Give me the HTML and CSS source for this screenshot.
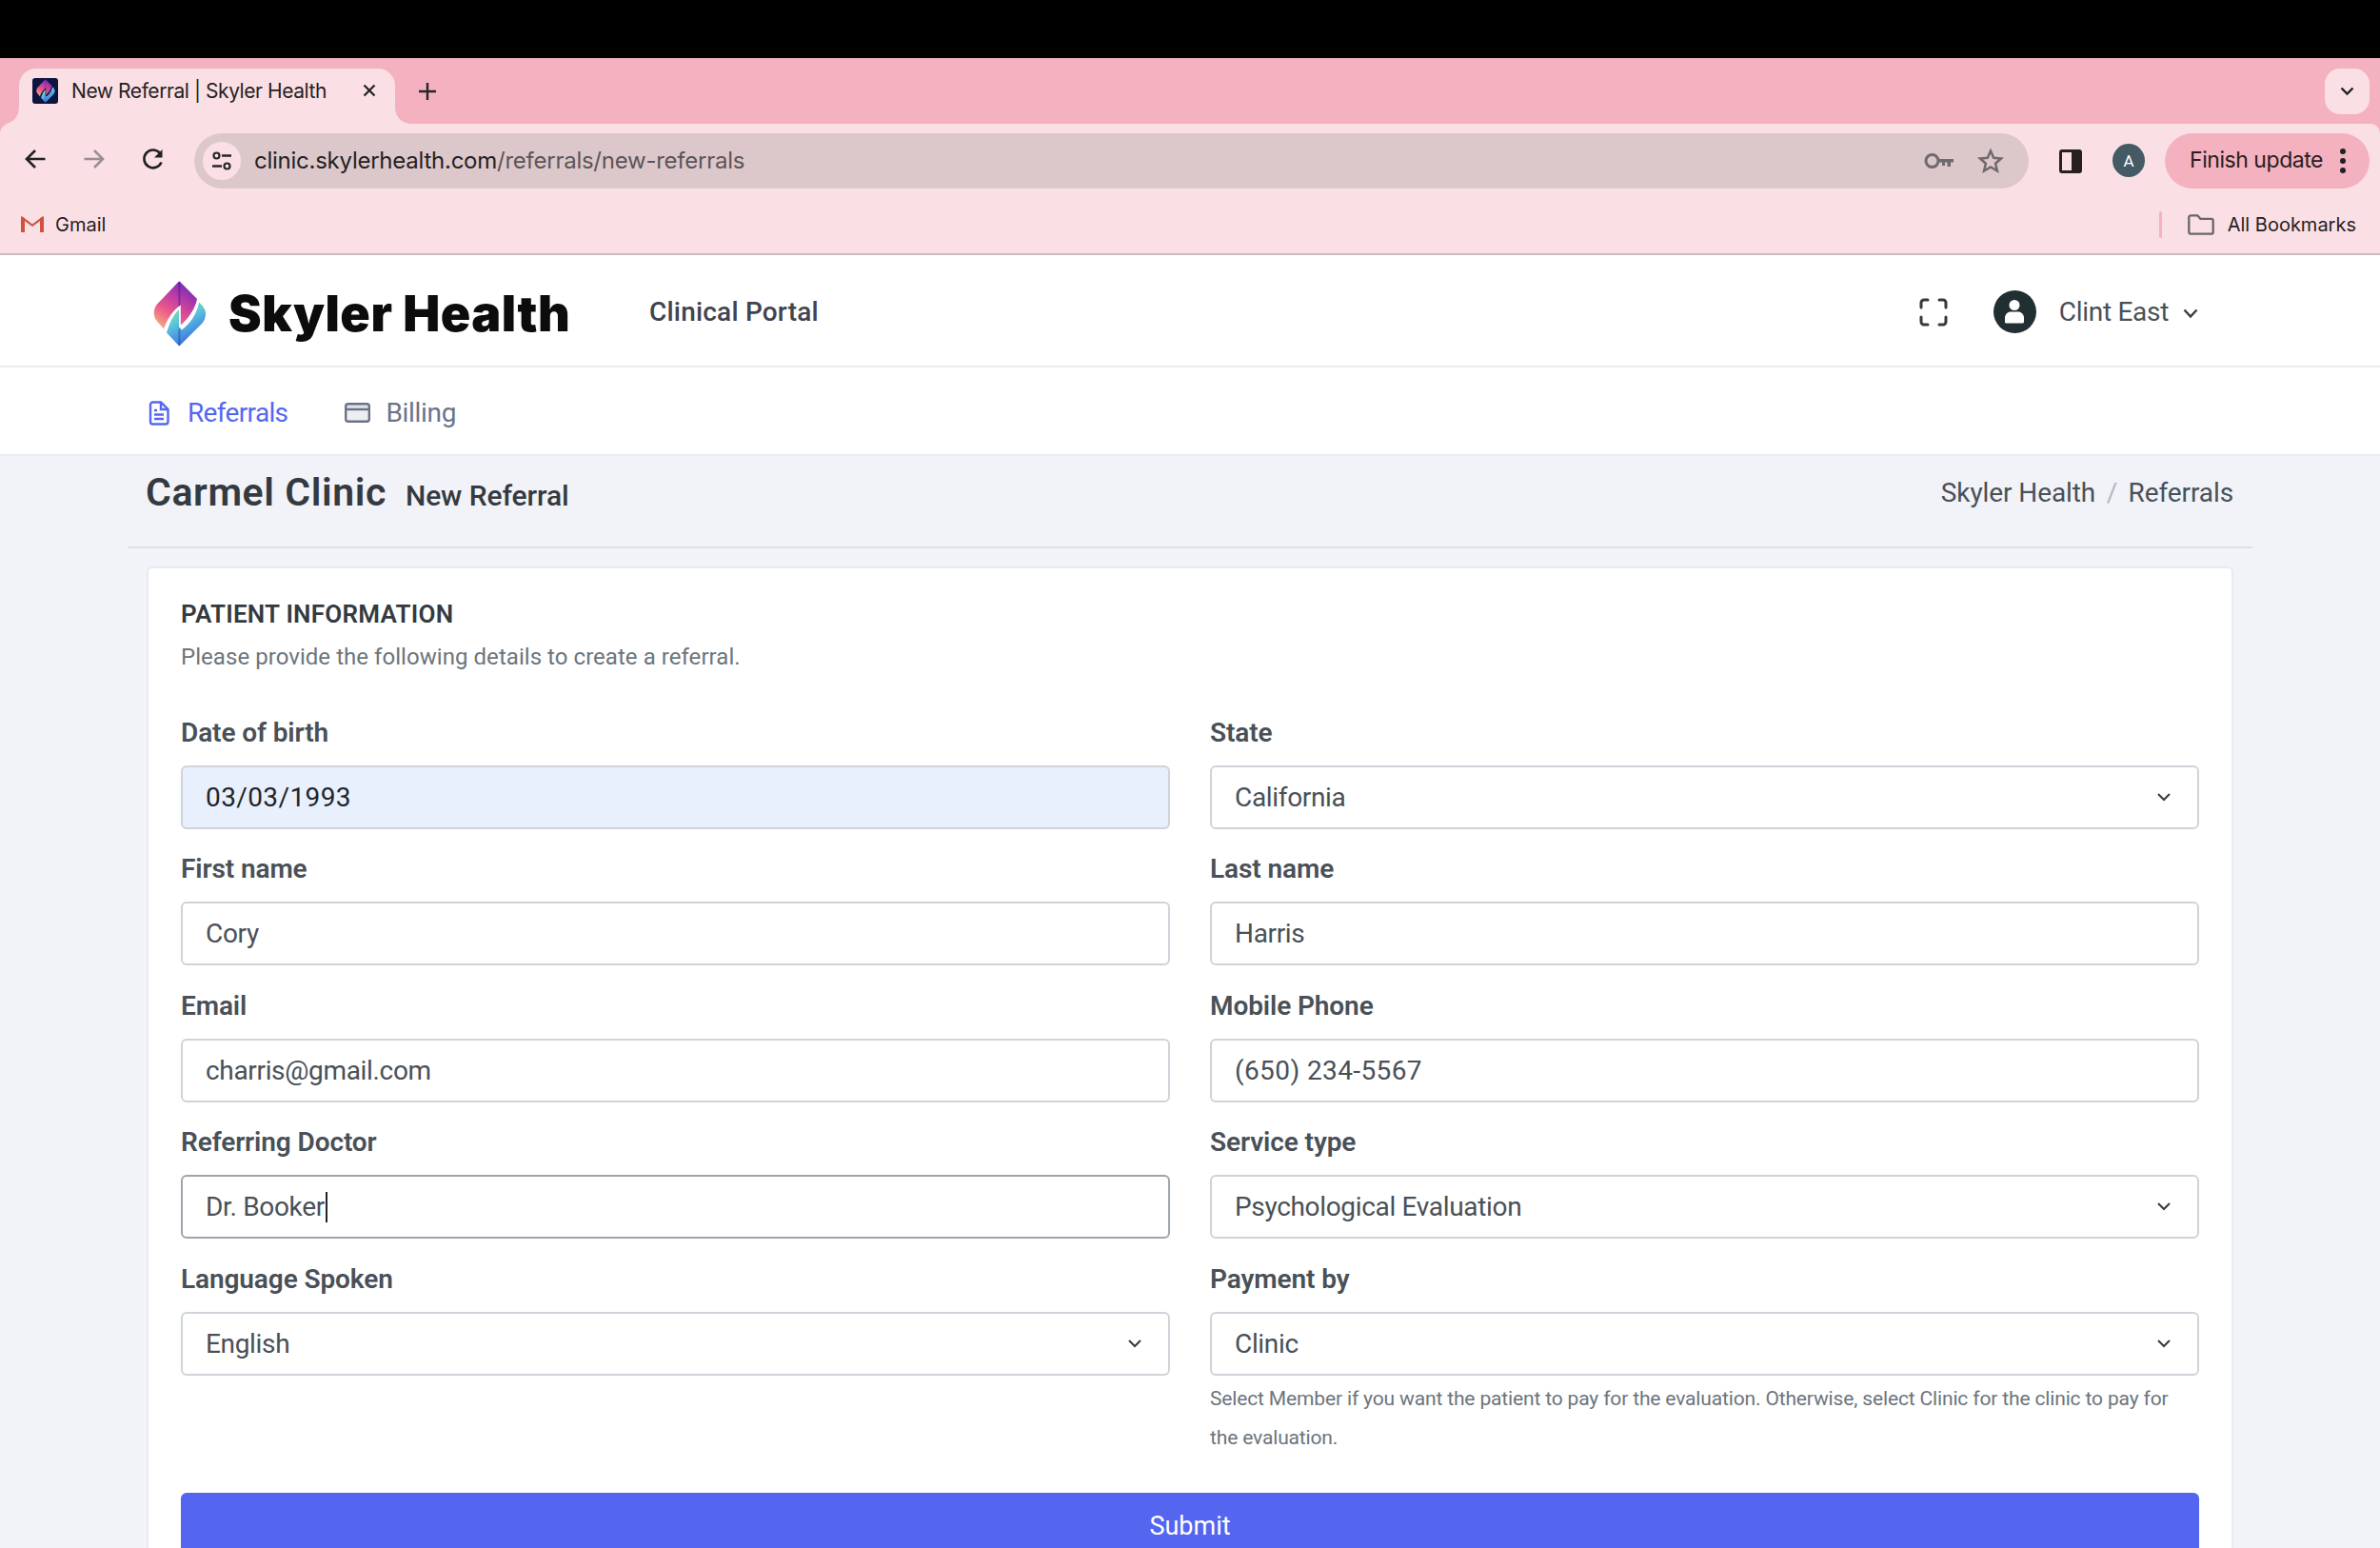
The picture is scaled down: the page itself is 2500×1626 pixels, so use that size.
FILE: index.html
```html
<!DOCTYPE html>
<html lang="en">
<head>
<meta charset="utf-8">
<title>New Referral | Skyler Health</title>
<link rel="stylesheet" href="styles.css">
</head>
<body>
<svg class="defs" width="0" height="0" aria-hidden="true">
  <defs>
    <linearGradient id="gA" x1="0.7" y1="0" x2="0.1" y2="1">
      <stop offset="0" stop-color="#6f2bb8"/><stop offset="0.3" stop-color="#b83aa6"/><stop offset="0.62" stop-color="#e9578a"/><stop offset="1" stop-color="#f8b582"/>
    </linearGradient>
    <linearGradient id="gB" x1="0.2" y1="0" x2="0.7" y2="1">
      <stop offset="0" stop-color="#8ce6a6"/><stop offset="0.4" stop-color="#5cc6dc"/><stop offset="0.75" stop-color="#4489e2"/><stop offset="1" stop-color="#2f4fc0"/>
    </linearGradient>
    <symbol id="flame" viewBox="21 15.500 56 69">
      <path fill="url(#gA)" d="M47.500 16.500Q48.300 15.700 49.100 16.500L67 34.500C65 45 58 55 49.800 62V41L47 43C40 49 35 57 32 66L25 58Q21.700 54 21.700 50Q21.700 44 25 40Z"/>
      <path fill="url(#gB)" d="M48 45.500V63.500L51 67C60 60 67 50 69 38L73 42Q76 46 76 50Q76 56 72.500 60L49.100 83.300Q48.300 84 47.500 83.300L35 70C38 60 42 51 48 45.500Z"/>
      <path fill="#4a1a9a" opacity=".55" d="M47.500 16.500h1.800v24.500l-1.800 1.500z"/>
      <path fill="#24408f" opacity=".5" d="M47.500 66h1.800v17.500h-1.800z"/>
    </symbol>
  </defs>
</svg>

<div class="topbar"></div>

<div class="chrome">
<div class="tabstrip">
  <div class="tab">
    <span class="favicon"><svg width="20" height="25"><use href="#flame"/></svg></span>
    <span class="tab-title">New Referral | Skyler Health</span>
    <svg class="tab-close" width="16" height="16" viewBox="0 0 16 16"><path d="M2.500 2.500l11 11M13.500 2.500l-11 11" stroke="#202124" stroke-width="2.200" fill="none"/></svg>
  </div>
  <svg class="tab-new" width="20" height="20" viewBox="0 0 20 20"><path d="M10 1v18M1 10h18" stroke="#2a2528" stroke-width="2.400"/></svg>
  <div class="tab-menu"><svg width="15" height="10" viewBox="0 0 15 10"><path d="M1.500 1.500l6 6 6-6" stroke="#202124" stroke-width="2.400" fill="none"/></svg></div>
</div>

<div class="toolbar">
  <div class="navrow">
    <svg class="nav-ic" width="24" height="24" viewBox="0 0 24 24"><path d="M22.500 12H3.500M12 3l-9 9 9 9" stroke="#202124" stroke-width="2.600" fill="none"/></svg>
    <svg class="nav-ic dim" width="24" height="24" viewBox="0 0 24 24"><path d="M1.500 12h19M12 3l9 9-9 9" stroke="#9b8d92" stroke-width="2.600" fill="none"/></svg>
    <svg class="nav-ic" width="24" height="24" viewBox="0 0 24 24"><path d="M20.500 15.500A9.400 9.400 0 1 1 18.800 5.600" stroke="#202124" stroke-width="2.600" fill="none"/><path d="M21.500 2v8.500h-8.500z" fill="#202124"/></svg>
    <div class="urlbar">
      <span class="tune"><svg width="22" height="20" viewBox="0 0 22 20"><circle cx="5.500" cy="4.500" r="3" fill="none" stroke="#2a2528" stroke-width="2.200"/><path d="M11 4.500h10M1 15.500h10" stroke="#2a2528" stroke-width="2.400"/><circle cx="16.500" cy="15.500" r="3" fill="none" stroke="#2a2528" stroke-width="2.200"/></svg></span>
      <span class="url"><span class="url-host">clinic.skylerhealth.com</span>/referrals/new-referrals</span>
      <svg class="key" width="32" height="18" viewBox="0 0 32 18"><circle cx="8.500" cy="9" r="6.500" fill="none" stroke="#6f6a6c" stroke-width="3"/><path d="M15 7h16v3.500h-3V15h-3.500v-4.500H22V14h-3v-3.500h-4z" fill="#6f6a6c"/></svg>
      <svg class="star" width="28" height="28" viewBox="0 0 28 28"><path d="M14 3.500l3.200 7.300 7.800.7-5.900 5.200 1.800 7.800-6.900-4.100-6.900 4.100 1.800-7.800L3 11.500l7.800-.7z" fill="none" stroke="#6f6a6c" stroke-width="2.500"/></svg>
    </div>
    <div class="side-panel"><span></span></div>
    <div class="profile">A</div>
    <div class="finish">
      <span class="finish-text">Finish update</span>
      <svg width="8" height="28" viewBox="0 0 8 28"><circle cx="4" cy="4" r="3" fill="#202124"/><circle cx="4" cy="14" r="3" fill="#202124"/><circle cx="4" cy="24" r="3" fill="#202124"/></svg>
    </div>
  </div>
  <div class="bookmarks">
    <svg width="26" height="19" viewBox="0 0 26 19"><path d="M1 18V2l12 9 12-9v16h-4V8l-8 6-8-6v10z" fill="#e5e3e3"/><path d="M1 18V1.500h1.500L5 3.500V18z" fill="#d2513f"/><path d="M25 18V1.500h-1.500L21 3.500V18z" fill="#d2513f"/><path d="M2.500 1.500L13 9.500l10.500-8 1 2L13 12 1.500 3.500z" fill="#d2513f"/></svg>
    <span class="bm-text">Gmail</span>
    <span class="bm-sep"></span>
    <svg class="folder" width="28" height="22" viewBox="0 0 28 22"><path d="M1.300 3.300c0-1.100.9-2 2-2h7l3 3.500h11.400c1.100 0 2 .9 2 2v11.900c0 1.100-.9 2-2 2H3.300c-1.100 0-2-.9-2-2z" fill="none" stroke="#6b6668" stroke-width="2.300"/></svg>
    <span class="bm-text">All Bookmarks</span>
  </div>
</div>
</div>

<header class="app-header">
  <div class="brand">
    <svg class="logo" width="56" height="69"><use href="#flame"/></svg>
    <span class="brand-name">Skyler Health</span>
  </div>
  <span class="portal">Clinical Portal</span>
  <svg class="expand" width="30" height="30" viewBox="0 0 30 30"><path d="M2 10V5a3 3 0 0 1 3-3h4M21 2h4a3 3 0 0 1 3 3v5M28 20v5a3 3 0 0 1-3 3h-4M9 28H5a3 3 0 0 1-3-3v-5" fill="none" stroke="#343a40" stroke-width="3" stroke-linecap="round"/></svg>
  <span class="user-avatar"><svg width="22" height="26" viewBox="0 0 22 26"><circle cx="11" cy="6.500" r="5.500" fill="#fff"/><path d="M1 24v-4c0-4 3-6.500 6-6.500h8c3 0 6 2.500 6 6.500v4c0 1-1 1.500-1.500 1.500h-17C1.700 25.500 1 25 1 24z" fill="#fff"/></svg></span>
  <span class="user-name">Clint East</span>
  <svg class="user-caret" width="16" height="11" viewBox="0 0 16 11"><path d="M1.500 1.500l6.500 7 6.500-7" fill="none" stroke="#343a40" stroke-width="2.400"/></svg>
</header>

<nav class="app-nav">
  <a class="nav-link active">
    <svg width="22" height="26" viewBox="0 0 22 26"><path d="M2 4a2.500 2.500 0 0 1 2.500-2.500H13L20.500 9v13a2.500 2.500 0 0 1-2.500 2.500H4.500A2.500 2.500 0 0 1 2 22z" fill="none" stroke="#5468ef" stroke-width="2.400"/><path d="M13 2v7h7M6 10h3M6 14.500h10M6 19h10" fill="none" stroke="#5468ef" stroke-width="2.400"/></svg>
    <span>Referrals</span>
  </a>
  <a class="nav-link billing">
    <svg width="27" height="21" viewBox="0 0 27 21"><rect x="1.200" y="1.200" width="24.600" height="18.600" rx="2.500" fill="none" stroke="#6c7389" stroke-width="2.400"/><path d="M1.500 7h24" stroke="#6c7389" stroke-width="2.400"/><rect x="2" y="2" width="23" height="5" fill="#6c7389" opacity=".2"/><rect x="2" y="8" width="23" height="11" fill="#6c7389" opacity=".12"/></svg>
    <span>Billing</span>
  </a>
</nav>

<main class="page">
  <div class="page-head">
    <div class="titles">
      <h1>Carmel Clinic</h1>
      <span class="sub-title">New Referral</span>
    </div>
    <div class="crumbs"><span>Skyler Health</span><span class="slash">/</span><span>Referrals</span></div>
  </div>

  <section class="card">
    <h2>PATIENT INFORMATION</h2>
    <p class="lead">Please provide the following details to create a referral.</p>
    <div class="form-grid">
      <div class="field"><div class="label">Date of birth</div><div class="control autofill num">03/03/1993</div></div>
      <div class="field"><div class="label">State</div><div class="control">California<svg class="chev" width="14" height="9" viewBox="0 0 14 9"><path d="M1 1l6 6 6-6" fill="none" stroke="#343a40" stroke-width="2"/></svg></div></div>
      <div class="field"><div class="label">First name</div><div class="control">Cory</div></div>
      <div class="field"><div class="label">Last name</div><div class="control">Harris</div></div>
      <div class="field"><div class="label">Email</div><div class="control">charris@gmail.com</div></div>
      <div class="field"><div class="label">Mobile Phone</div><div class="control num">(650) 234-5567</div></div>
      <div class="field"><div class="label">Referring Doctor</div><div class="control focused">Dr. Booker<span class="caret"></span></div></div>
      <div class="field"><div class="label">Service type</div><div class="control">Psychological Evaluation<svg class="chev" width="14" height="9" viewBox="0 0 14 9"><path d="M1 1l6 6 6-6" fill="none" stroke="#343a40" stroke-width="2"/></svg></div></div>
      <div class="field"><div class="label">Language Spoken</div><div class="control">English<svg class="chev" width="14" height="9" viewBox="0 0 14 9"><path d="M1 1l6 6 6-6" fill="none" stroke="#343a40" stroke-width="2"/></svg></div></div>
      <div class="field"><div class="label">Payment by</div><div class="control">Clinic<svg class="chev" width="14" height="9" viewBox="0 0 14 9"><path d="M1 1l6 6 6-6" fill="none" stroke="#343a40" stroke-width="2"/></svg></div>
        <p class="help">Select Member if you want the patient to pay for the evaluation. Otherwise, select Clinic for the clinic to pay for<br>the evaluation.</p>
      </div>
    </div>
    <button class="submit" type="button">Submit</button>
  </section>
</main>
</body>
</html>
```

FILE: styles.css
```css
* { box-sizing: border-box; }
html, body { margin: 0; height: 1626px; overflow: hidden; }
body { font-family: Roboto, "Liberation Sans", sans-serif; background: #f2f3f8; color: #495057; }
.defs { display: block; height: 0; }

.topbar { height: 61px; background: #000; }

.chrome { background: #f4b1bf; }
.tabstrip { height: 69px; display: flex; align-items: flex-start; padding: 11px 11px 0 20px; }
.tab { position: relative; width: 395px; height: 58px; background: #fae0e5; border-radius: 18px 18px 0 0; display: flex; align-items: center; padding: 0 0 12px 14px; }
.tab::before, .tab::after { content: ""; position: absolute; bottom: 0; width: 16px; height: 16px; background: radial-gradient(circle at 100% 0, #f4b1bf 15.500px, #fae0e5 16px); }
.tab::before { left: -16px; transform: scaleX(-1); }
.tab::after { right: -16px; }
.favicon { width: 27px; height: 27px; background: #0d1440; border-radius: 3px; display: flex; align-items: center; justify-content: center; }
.tab-title { flex: none; margin-left: 14px; font-size: 21px; color: #26201f; width: 305px; font-family: Inter, Roboto, sans-serif; letter-spacing: -0.43px; white-space: nowrap; }
.tab-close { flex: none; }
.tab-new { margin: 14px 0 0 24px; }
.tab-menu { margin-left: auto; width: 47px; height: 48px; background: #fae0e5; border-radius: 16px; display: flex; align-items: center; justify-content: center; }

.toolbar { height: 138px; background: #fae0e5; border-bottom: 2px solid #c9bcc0; border-radius: 10px 10px 0 0; }
.navrow { height: 69px; padding: 10px 11px 0 25px; display: flex; align-items: flex-start; }
.nav-ic { flex: none; margin-top: 15px; margin-right: 38px; }
.nav-ic.dim + .nav-ic { margin-right: 31px; }
.urlbar { flex: none; width: 1927px; height: 58px; background: #dcc8cb; border-radius: 29px; display: flex; align-items: center; padding: 0 26px 0 9px; margin-right: 32px; }
.tune { width: 40px; height: 40px; border-radius: 50%; background: #fae0e5; display: flex; align-items: center; justify-content: center; }
.url { margin: 0 0 2px 14px; font-size: 24px; color: #5d5457; font-family: Inter, Roboto, sans-serif; letter-spacing: -0.25px; white-space: nowrap; }
.url-host { color: #26201f; }
.key { margin-left: auto; }
.star { margin-left: 24px; }
.side-panel { flex: none; width: 24px; height: 25px; margin: 17px 32px 0 0; background: #26201f; border: 3px solid #26201f; border-radius: 3px; }
.side-panel span { display: block; width: 10px; height: 100%; background: #fae0e5; }
.profile { flex: none; width: 34px; height: 35px; margin: 11px 21px 0 0; border-radius: 50%; background: #445b66; color: #fff; font-size: 17px; display: flex; align-items: center; justify-content: center; }
.finish { flex: none; width: 215px; height: 58px; border-radius: 29px; background: #f4b1bf; display: flex; align-items: center; padding-left: 26px; font-size: 23px; color: #26201f; font-family: Inter, Roboto, sans-serif; letter-spacing: -0.45px; white-space: nowrap; }
.finish-text { flex: none; width: 157px; margin-bottom: 2px; }
.finish svg { flex: none; }
.bookmarks { height: 67px; display: flex; align-items: center; padding: 6px 25px 0 21px; font-size: 20px; color: #26201f; font-family: Inter, Roboto, sans-serif; }
.bm-text { margin-left: 11px; white-space: nowrap; }
.bm-sep { margin-left: auto; width: 3px; height: 28px; background: #f4b1bf; border-radius: 2px; margin-right: 27px; }
.folder { flex: none; }
.bm-text:last-child { margin-left: 14px; }

.app-header { height: 118px; background: #fff; border-bottom: 2px solid #e9ebf1; display: flex; align-items: center; padding: 2px 191px 0 161px; }
.brand { display: flex; align-items: center; width: 521px; padding-top: 4px; }
.logo { flex: none; }
.brand-name { margin-left: 23px; font-family: Inter, sans-serif; font-weight: 900; font-size: 52px; color: #0c0c0c; letter-spacing: 0.5px; white-space: nowrap; }
.portal { font-size: 28px; font-weight: 500; color: #3f4450; letter-spacing: 0.2px; white-space: nowrap; }
.expand { margin-left: auto; margin-top: 2px; }
.user-avatar { margin-left: 48px; width: 45px; height: 45px; background: #212f33; border-radius: 50%; display: flex; align-items: center; justify-content: center; }
.user-name { margin-left: 24px; font-size: 28px; color: #495057; letter-spacing: -0.3px; white-space: nowrap; }
.user-caret { margin-left: 15px; margin-top: 4px; }

.app-nav { height: 93px; background: #fff; border-bottom: 2px solid #e9ebf1; display: flex; align-items: center; padding: 4px 0 0 156px; gap: 60px; }
.nav-link { display: flex; align-items: center; gap: 19px; font-size: 28px; color: #6c7389; letter-spacing: -0.65px; }
.nav-link.billing { gap: 16px; letter-spacing: -0.3px; }
.nav-link.active { color: #5468ef; }

.page { display: block; }
.page-head { margin: 0 134px; height: 97px; border-bottom: 2px solid #dfe1e6; display: flex; justify-content: space-between; align-items: flex-start; padding: 11px 20px 0 19px; }
.titles { display: flex; align-items: baseline; gap: 20px; }
h1 { margin: 0; font-size: 41px; font-weight: 600; color: #343a40; letter-spacing: 0.6px; line-height: 54px; }
.sub-title { font-size: 30px; font-weight: 500; color: #343a40; letter-spacing: -0.1px; }
.crumbs { display: flex; gap: 11.500px; font-size: 28px; color: #495057; line-height: 54px; letter-spacing: -0.1px; margin-top: 1px; }
.slash { color: #b4b8be; }

.card { margin: 19px 154px 0; background: #fff; border: 2px solid #e8eaf2; border-radius: 6px; padding: 33px 34px 0; height: 1100px; }
h2 { margin: 0; font-size: 26px; font-weight: 600; color: #343a40; line-height: 30px; letter-spacing: 0.25px; }
.lead { margin: 13px 0 0; font-size: 24px; line-height: 34px; color: #6c757d; letter-spacing: 0.05px; }
.form-grid { margin-top: 42px; display: grid; grid-template-columns: 1fr 1fr; column-gap: 42px; row-gap: 21.400px; }
.label { height: 40px; line-height: 42px; margin-bottom: 15px; font-size: 28px; font-weight: 600; color: #495057; letter-spacing: -0.1px; }
.control { position: relative; height: 67px; border: 2px solid #ced4da; border-radius: 6px; background: #fff; padding: 0 24px; display: flex; align-items: center; font-size: 28px; color: #495057; letter-spacing: -0.33px; }
.control.num { letter-spacing: 0.4px; }
.control.autofill { background: #e8f0fe; color: #212529; }
.control.focused { border-color: #9ea5ac; }
.caret { display: inline-block; width: 2px; height: 32px; background: #212529; margin-left: 1px; }
.chev { position: absolute; right: 28px; top: 27px; }
.help { margin: 4px 0 0; font-size: 21px; line-height: 41.500px; color: #6c757d; letter-spacing: -0.15px; white-space: nowrap; }
.submit { display: block; width: 100%; height: 70px; margin-top: 36px; background: #5465ef; border: 0; border-radius: 6px; color: #fff; font-family: inherit; font-size: 27px; }
```
